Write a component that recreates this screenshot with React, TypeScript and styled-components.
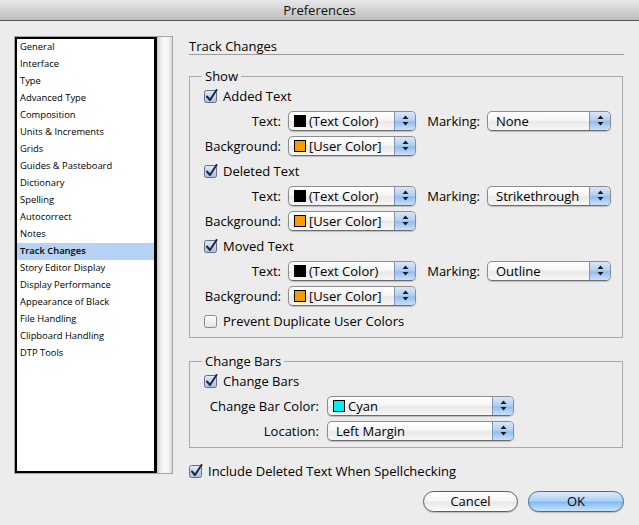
import React from 'react'
import styled, { createGlobalStyle } from 'styled-components'

const GlobalStyle = createGlobalStyle`
  html, body {
    margin: 0;
    padding: 0;
    background: #ececec;
  }
  body {
    font-family: 'Open Sans', 'DejaVu Sans', sans-serif;
    font-size: 13px;
    color: #000;
  }
`

const Window = styled.div`
  width: 639px;
  height: 525px;
  display: flex;
  flex-direction: column;
  background: #ececec;
  overflow: hidden;
`

const TitleBar = styled.div`
  height: 20px;
  line-height: 20px;
  text-align: center;
  font-size: 13px;
  color: #111;
  background: linear-gradient(#e8e8e8, #d2d2d2 50%, #bcbcbc);
  border-bottom: 1px solid #555;
  flex-shrink: 0;
`

const Body = styled.div`
  display: flex;
  padding: 15px 0 0 14px;
  gap: 16px;
`

const ListBox = styled.div`
  width: 159px;
  height: 438px;
  box-sizing: border-box;
  border: 1px solid #a4a4a4;
  display: flex;
  flex-shrink: 0;
  background: #fff;
`

const List = styled.ul`
  list-style: none;
  margin: 0;
  padding: 0;
  width: 142px;
  box-sizing: border-box;
  border: 2px solid #000;
  border-right-width: 3px;
  background: #fff;
`

const Item = styled.li<{ $selected?: boolean }>`
  height: 17px;
  line-height: 16px;
  padding-left: 3px;
  font-size: 9.4px;
  color: #000;
  white-space: nowrap;
  background: ${(p) => (p.$selected ? '#b6d2f5' : 'transparent')};
  font-weight: ${(p) => (p.$selected ? 600 : 500)};
`

const ScrollTrack = styled.div`
  flex: 1;
  background: linear-gradient(to right, #c9c9c9, #eeeeee 25%, #fbfbfb 55%, #f2f2f2 80%, #d6d6d6);
`

const Panel = styled.div`
  width: 435px;
  padding-top: 2px;
  display: flex;
  flex-direction: column;
`

const Header = styled.div`
  height: 16px;
  line-height: 16px;
  border-bottom: 1px solid #9c9c9c;
  font-size: 13px;
`

const Group = styled.div<{ $top: number }>`
  position: relative;
  margin-top: ${(p) => p.$top}px;
  width: 434px;
  box-sizing: border-box;
  border: 1px solid #a9a9a9;
  padding: 6px 0 4px 14px;
`

const Plain = styled.div`
  margin-top: 10px;
`

const Legend = styled.span`
  position: absolute;
  top: -10px;
  left: 12px;
  padding: 0 3px;
  background: #ececec;
  line-height: 18px;
`

const Row = styled.div`
  height: 25px;
  display: flex;
  align-items: center;
`

const CheckLabel = styled.span`
  margin-left: 5px;
`

const Label = styled.span<{ $w: number; $gap?: number; $left?: number }>`
  width: ${(p) => p.$w}px;
  text-align: right;
  margin-right: ${(p) => p.$gap ?? 7}px;
  margin-left: ${(p) => p.$left ?? 0}px;
  white-space: nowrap;
  flex-shrink: 0;
`

const PopupBox = styled.div<{ $w: number }>`
  width: ${(p) => p.$w}px;
  height: 20px;
  box-sizing: border-box;
  display: flex;
  align-items: stretch;
  border: 1px solid #8d8d8d;
  border-bottom-color: #6c6c6c;
  border-radius: 5px;
  background: linear-gradient(#ffffff, #f6f6f6 45%, #e9e9e9 55%, #f7f7f7);
  box-shadow: 0 1px 1px rgba(0, 0, 0, 0.2);
  overflow: hidden;
  flex-shrink: 0;
`

const PopupValue = styled.div`
  flex: 1;
  display: flex;
  align-items: center;
  padding-left: 5px;
  white-space: nowrap;
  overflow: hidden;
`

const PopupText = styled.span`
  margin-left: 3px;
`

const Swatch = styled.span<{ $color: string }>`
  width: 10px;
  height: 10px;
  border: 1px solid #000;
  background: ${(p) => p.$color};
  flex-shrink: 0;
`

const Stepper = styled.div`
  width: 20px;
  border-left: 1px solid #8193b4;
  background: linear-gradient(#d9e7f8, #b2d0f3 45%, #93bdef 55%, #c9e1fb);
  display: flex;
  align-items: center;
  justify-content: center;
`

const Footer = styled.div`
  display: flex;
  justify-content: flex-end;
  gap: 10px;
  margin-top: 8px;
`

const Button = styled.div<{ $primary?: boolean; $w: number }>`
  width: ${(p) => p.$w}px;
  height: 21px;
  box-sizing: border-box;
  border-radius: 11px;
  border: 1px solid ${(p) => (p.$primary ? '#4a6892' : '#5f5f5f')};
  background: ${(p) =>
    p.$primary
      ? 'linear-gradient(#dbebfc, #aed2f6 45%, #86bcf1 55%, #c6e4fd)'
      : 'linear-gradient(#ffffff, #f6f6f6 45%, #e8e8e8 55%, #fbfbfb)'};
  box-shadow: 0 1px 1px rgba(0, 0, 0, 0.2);
  display: flex;
  align-items: center;
  justify-content: center;
  font-size: 13px;
  line-height: 1;
`

const Check = ({ checked }: { checked: boolean }) => (
  <svg width="14" height="14" viewBox="0 0 14 14">
    <defs>
      <linearGradient id={checked ? 'cbOn' : 'cbOff'} x1="0" y1="0" x2="0" y2="1">
        <stop offset="0" stopColor={checked ? '#e4ecf6' : '#ffffff'} />
        <stop offset="1" stopColor={checked ? '#a9bfdc' : '#e2e2e2'} />
      </linearGradient>
    </defs>
    <rect
      x="0.5"
      y="1.5"
      width="12"
      height="12"
      rx="2"
      fill={`url(#${checked ? 'cbOn' : 'cbOff'})`}
      stroke={checked ? '#5f6f89' : '#8a8a8a'}
    />
    {checked && (
      <path
        d="M3 7.5 L6 11 L12.5 1"
        fill="none"
        stroke="#1c2740"
        strokeWidth="2"
        strokeLinecap="round"
        strokeLinejoin="round"
      />
    )}
  </svg>
)

const Arrows = () => (
  <svg width="7" height="11" viewBox="0 0 7 11">
    <path d="M3.5 0.5 L6.5 4 L0.5 4 Z" fill="#1a1a1a" />
    <path d="M0.5 7 L6.5 7 L3.5 10.5 Z" fill="#1a1a1a" />
  </svg>
)

const Popup = ({ w, value, swatch }: { w: number; value: string; swatch?: string }) => (
  <PopupBox $w={w}>
    <PopupValue>
      {swatch && <Swatch $color={swatch} />}
      <PopupText>{value}</PopupText>
    </PopupValue>
    <Stepper>
      <Arrows />
    </Stepper>
  </PopupBox>
)

const CheckRow = ({ label, checked = true }: { label: string; checked?: boolean }) => (
  <Row>
    <Check checked={checked} />
    <CheckLabel>{label}</CheckLabel>
  </Row>
)

const TextRows = ({ marking }: { marking: string }) => (
  <>
    <Row>
      <Label $w={77}>Text:</Label>
      <Popup w={128} value="(Text Color)" swatch="#000" />
      <Label $w={54} $left={10}>
        Marking:
      </Label>
      <Popup w={124} value={marking} />
    </Row>
    <Row>
      <Label $w={77}>Background:</Label>
      <Popup w={128} value="[User Color]" swatch="#fa9a00" />
    </Row>
  </>
)

const sections = [
  'General',
  'Interface',
  'Type',
  'Advanced Type',
  'Composition',
  'Units & Increments',
  'Grids',
  'Guides & Pasteboard',
  'Dictionary',
  'Spelling',
  'Autocorrect',
  'Notes',
  'Track Changes',
  'Story Editor Display',
  'Display Performance',
  'Appearance of Black',
  'File Handling',
  'Clipboard Handling',
  'DTP Tools',
]

export default function App() {
  return (
    <Window>
      <GlobalStyle />
      <TitleBar>Preferences</TitleBar>
      <Body>
        <ListBox>
          <List>
            {sections.map((s) => (
              <Item key={s} $selected={s === 'Track Changes'}>
                {s}
              </Item>
            ))}
          </List>
          <ScrollTrack />
        </ListBox>
        <Panel>
          <Header>Track Changes</Header>
          <Group $top={21}>
            <Legend>Show</Legend>
            <CheckRow label="Added Text" />
            <TextRows marking="None" />
            <CheckRow label="Deleted Text" />
            <TextRows marking="Strikethrough" />
            <CheckRow label="Moved Text" />
            <TextRows marking="Outline" />
            <CheckRow label="Prevent Duplicate User Colors" checked={false} />
          </Group>
          <Group $top={23}>
            <Legend>Change Bars</Legend>
            <CheckRow label="Change Bars" />
            <Row>
              <Label $w={115} $gap={8}>
                Change Bar Color:
              </Label>
              <Popup w={187} value="Cyan" swatch="#00f0f0" />
            </Row>
            <Row>
              <Label $w={115} $gap={8}>
                Location:
              </Label>
              <Popup w={187} value="Left Margin" />
            </Row>
          </Group>
          <Plain>
            <CheckRow label="Include Deleted Text When Spellchecking" />
          </Plain>
          <Footer>
            <Button $w={95}>Cancel</Button>
            <Button $w={96} $primary>
              OK
            </Button>
          </Footer>
        </Panel>
      </Body>
    </Window>
  )
}
